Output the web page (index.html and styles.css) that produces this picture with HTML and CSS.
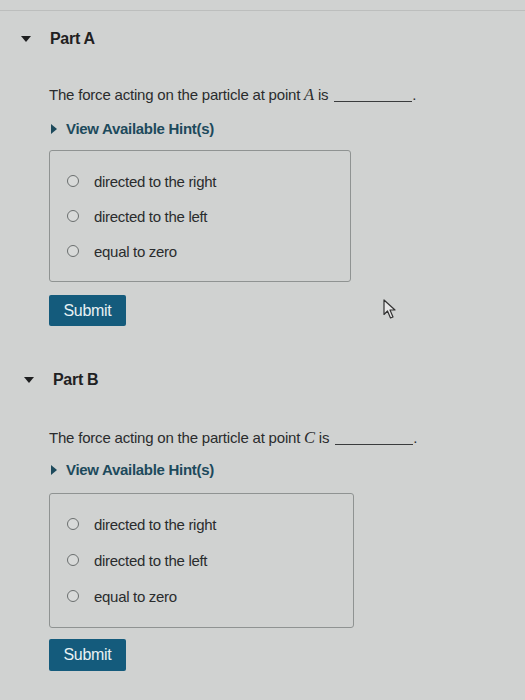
FILE: index.html
```html
<!DOCTYPE html>
<html>
<head>
<meta charset="utf-8">
<link rel="stylesheet" href="styles.css">
</head>
<body>
<div class="page">
  <section class="part part-a">
    <div class="part-head"><span class="caret"></span><span class="part-title">Part A</span></div>
    <div class="part-body">
      <p class="question">The force acting on the particle at point <i class="math">A</i> is <span class="blank"></span>.</p>
      <div class="hint"><span class="hint-caret"></span>View Available Hint(s)</div>
      <div class="options">
        <label class="opt"><span class="radio"></span>directed to the right</label>
        <label class="opt"><span class="radio"></span>directed to the left</label>
        <label class="opt"><span class="radio"></span>equal to zero</label>
      </div>
      <button class="submit">Submit</button>
    </div>
  </section>
  <section class="part part-b">
    <div class="part-head"><span class="caret"></span><span class="part-title">Part B</span></div>
    <div class="part-body">
      <p class="question">The force acting on the particle at point <i class="math">C</i> is <span class="blank"></span>.</p>
      <div class="hint"><span class="hint-caret"></span>View Available Hint(s)</div>
      <div class="options">
        <label class="opt"><span class="radio"></span>directed to the right</label>
        <label class="opt"><span class="radio"></span>directed to the left</label>
        <label class="opt"><span class="radio"></span>equal to zero</label>
      </div>
      <button class="submit">Submit</button>
    </div>
  </section>
  <svg class="cursor" width="14" height="21" viewBox="0 0 14 21"><path d="M1 1 L1 15.5 L4.5 12 L7.5 19 L10 18 L7 11 L12 11 Z" fill="#e8e8e8" stroke="#333" stroke-width="1.2" stroke-linejoin="round"/></svg>
</div>
</body>
</html>
```
FILE: styles.css
```css
html, body {
  margin: 0;
  padding: 0;
  background: #d0d2d1;
}
body {
  font-family: "Liberation Sans", Arial, sans-serif;
  color: #2b2d2e;
  width: 525px;
  height: 700px;
  overflow: hidden;
}
.page {
  position: relative;
  border-top: 1px solid #bcbebd;
  margin-top: 10px;
  height: 689px;
}
.part-head {
  display: flex;
  align-items: center;
  height: 24px;
  padding-left: 21px;
}
.part-a .part-head { margin-top: 16px; }
.part-b .part-head { margin-top: 42px; padding-left: 24px; }
.caret {
  width: 0; height: 0;
  border-left: 5px solid transparent;
  border-right: 5px solid transparent;
  border-top: 6px solid #1e1f20;
  margin-right: 19px;
}
.part-title {
  font-size: 16px;
  font-weight: bold;
  letter-spacing: -0.3px;
  color: #1f2122;
}
.part-body {
  padding-left: 49px;
}
.question {
  margin: 0;
  font-size: 15px;
  letter-spacing: -0.2px;
  line-height: 20px;
  color: #2a2c2d;
}
.part-a .question { margin-top: 34px; }
.part-b .question { margin-top: 36px; }
.math {
  font-family: "Liberation Serif", serif;
  font-size: 16.5px;
}
.blank {
  display: inline-block;
  width: 78px;
  border-bottom: 1px solid #3a3c3d;
  vertical-align: -2px;
  margin-left: 2px;
}
.hint {
  display: flex;
  align-items: center;
  margin-top: 15px;
  padding-left: 2px;
  font-size: 15px;
  font-weight: bold;
  letter-spacing: -0.3px;
  color: #1d4a5c;
}
.part-b .hint { margin-top: 13px; }
.hint-caret {
  width: 0; height: 0;
  border-top: 5px solid transparent;
  border-bottom: 5px solid transparent;
  border-left: 6px solid #1d4a5c;
  margin-right: 9px;
}
.options {
  margin-top: 13px;
  width: 302px;
  border: 1px solid #8f9392;
  border-radius: 3px;
  box-sizing: border-box;
  padding: 20px 0 20px 17px;
  display: flex;
  flex-direction: column;
  gap: 15px;
}
.part-b .options { width: 305px; margin-top: 15px; padding-top: 20px; padding-bottom: 21px; gap: 16px; }
.opt {
  display: flex;
  align-items: center;
  height: 20px;
  font-size: 15px;
  letter-spacing: -0.3px;
  color: #2a2c2d;
}
.radio {
  width: 10px;
  height: 10px;
  border: 1.5px solid #6a6e6e;
  border-radius: 50%;
  margin-right: 15px;
  background: #d8dad9;
}
.submit {
  display: block;
  margin-top: 13px;
  width: 77px;
  height: 31px;
  background: #145b7c;
  color: #e9f1f4;
  border: none;
  border-radius: 2px;
  font-family: "Liberation Sans", Arial, sans-serif;
  font-size: 16px;
  letter-spacing: -0.3px;
  padding: 0;
}
.part-b .submit { margin-top: 11px; height: 32px; }
.cursor {
  position: absolute;
  left: 383px;
  top: 288px;
}
```
